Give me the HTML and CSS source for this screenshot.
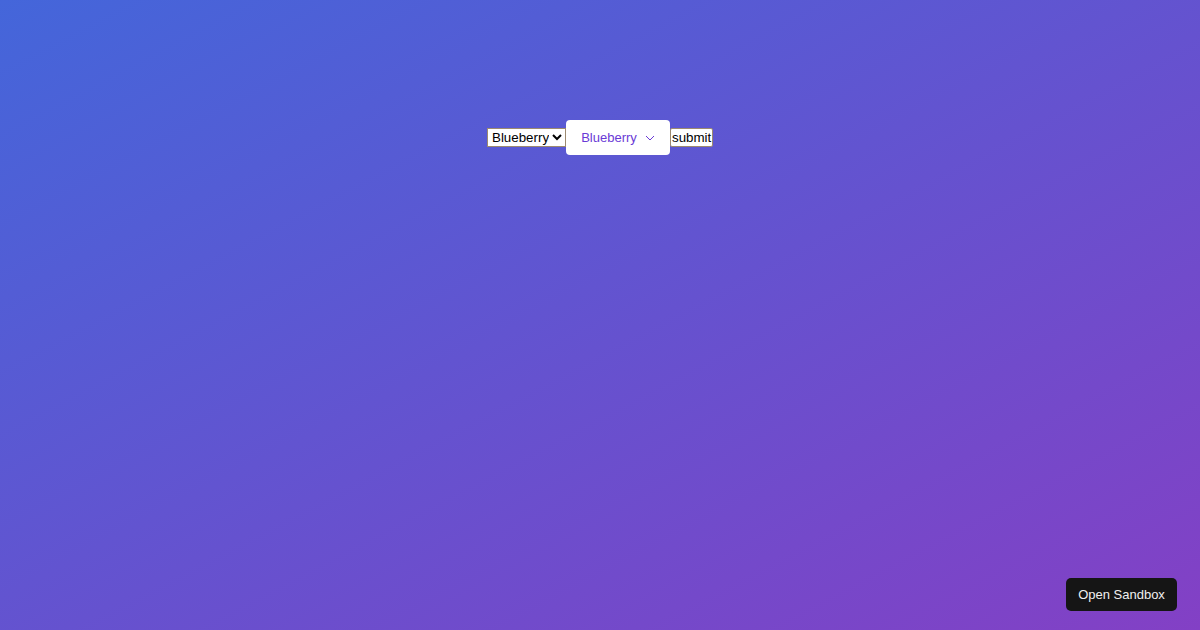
FILE: index.html
```html
<!DOCTYPE html>
<html lang="en">
<head>
<meta charset="utf-8">
<title>Select</title>
<link rel="stylesheet" href="styles.css">
</head>
<body>
<div class="page">
  <form class="row">
    <select class="native">
      <option>Blueberry</option>
      <option>Apple</option>
    </select>
    <button type="button" class="trigger">
      <span>Blueberry</span>
      <svg class="chev" width="10" height="6" viewBox="0 0 10 6"><path d="M1 1l4 4 4-4" fill="none" stroke="currentColor" stroke-width="1"/></svg>
    </button>
    <button type="submit" class="submit">submit</button>
  </form>
</div>
<button class="sandbox">Open Sandbox</button>
</body>
</html>
```
FILE: styles.css
```css
html, body {
  margin: 0;
  height: 100%;
}
body {
  background: linear-gradient(to bottom right, #4466da, #8340c5);
  font-family: "Liberation Sans", Arial, sans-serif;
}
.page {
  padding-top: 120px;
}
.row {
  display: flex;
  justify-content: center;
  align-items: center;
  margin: 0;
}
.native {
  width: 79px;
  height: 19px;
  background: #fff;
  color: #000;
  border: 1px solid #9c8a70;
  border-radius: 0;
  font-family: "Liberation Sans", Arial, sans-serif;
  font-size: 13.333px;
}
.trigger {
  display: flex;
  align-items: center;
  justify-content: center;
  gap: 8px;
  width: 104px;
  height: 35px;
  padding: 0 15px;
  background: #fff;
  border: none;
  border-radius: 4px;
  color: #6a3ad6;
  font-family: "Liberation Sans", Arial, sans-serif;
  font-size: 13px;
}
.chev {
  color: #6a3ad6;
}
.submit {
  width: 43px;
  height: 19px;
  padding: 0 1px;
  background: #fff;
  color: #000;
  border: 1px solid #9c8a70;
  border-radius: 2px;
  font-family: "Liberation Sans", Arial, sans-serif;
  font-size: 13.333px;
}
.sandbox {
  position: fixed;
  right: 23px;
  bottom: 19px;
  width: 111px;
  height: 33px;
  background: #151515;
  color: #f0f0f0;
  border: none;
  border-radius: 5px;
  font-family: "Liberation Sans", Arial, sans-serif;
  font-size: 13px;
}
```
